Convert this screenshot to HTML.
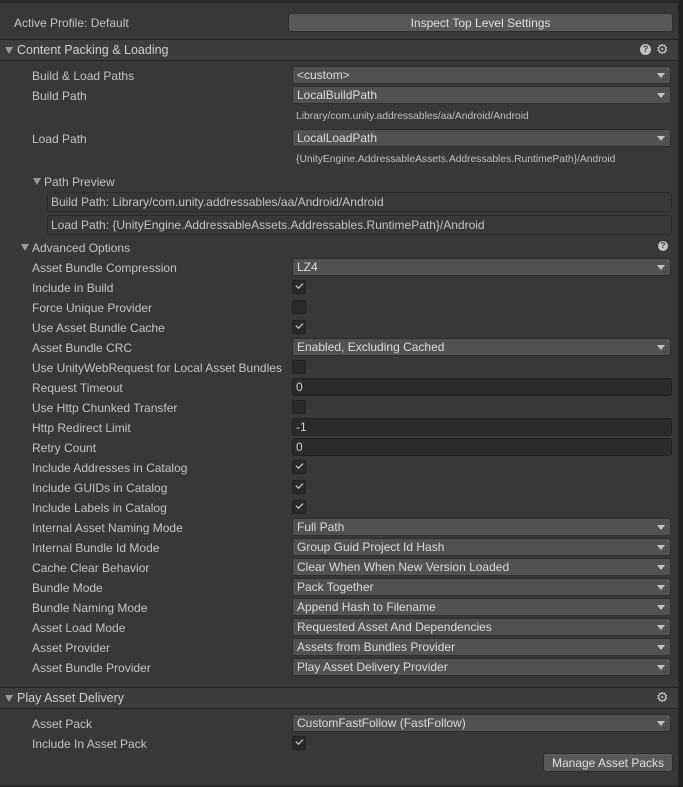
<!DOCTYPE html>
<html><head><meta charset="utf-8"><style>
body{margin:0;width:683px;height:787px;background:#383838;position:relative;overflow:hidden;font-family:"Liberation Sans",sans-serif;font-size:12px;color:#c4c4c4}
div{position:absolute;box-sizing:border-box}
.l{left:32px;white-space:nowrap;line-height:14px;transform:translateY(1px)}
.dd{left:292px;width:379px;height:18px;background:#515151;border:1px solid #2e2e2e;border-radius:3px;padding-left:4px;line-height:17px;color:#dcdcdc;white-space:nowrap}
.dd:after{content:"";position:absolute;right:5px;top:6px;border-left:4px solid transparent;border-right:4px solid transparent;border-top:5px solid #c4c4c4}
.tf{left:292px;width:380px;height:18px;background:#2a2a2a;border:1px solid #212121;border-radius:3px;padding-left:3px;line-height:17px;color:#d2d2d2}
.cb{left:292px;width:14px;height:14px;background:#2a2a2a;border:1px solid #212121;border-radius:2px}
.ck:after{content:"";position:absolute;left:3px;top:2px;width:6px;height:3px;border-left:1.6px solid #e0e0e0;border-bottom:1.6px solid #e0e0e0;transform:rotate(-45deg)}
.hdr{left:0;width:678px;height:22px;background:#3d3d3d;border-top:1px solid #232323;border-bottom:1px solid #232323;padding-left:17px;line-height:21px;font-size:12.5px;color:#d0d0d0}
.tri{width:0;height:0;border-left:4px solid transparent;border-right:4px solid transparent;border-top:7px solid #9a9a9a}
.small{left:296px;font-size:10.3px;color:#c0c0c0;white-space:nowrap}
.pv{left:47px;width:625px;height:20px;border:1px solid #2b2b2b;border-radius:3px;background:#383838;padding-left:3px;line-height:19px;color:#c4c4c4;white-space:nowrap}
</style></head><body>
<div style="left:678px;top:0;width:5px;height:787px;background:#232323"></div>
<div style="left:0;top:0;width:678px;height:3px;background:#2a2a2a"></div>
<div class="l" style="left:14px;top:15px">Active Profile: Default</div>
<div style="left:288px;top:13px;width:385px;height:19px;background:#585858;border:1px solid #2e2e2e;border-radius:3px;text-align:center;line-height:18px;color:#e0e0e0">Inspect Top Level Settings</div>

<div class="hdr" style="top:39px">Content Packing &amp; Loading</div>
<div class="tri" style="left:5px;top:47px"></div>
<div style="left:640px;top:44px;width:11px;height:11px;border-radius:50%;background:#c4c4c4;color:#3d3d3d;font-size:9px;font-weight:bold;text-align:center;line-height:11px">?</div>
<div style="left:656px;top:42px;color:#c4c4c4;font-size:14px;line-height:14px">⚙</div>

<div class="l" style="top:68px">Build &amp; Load Paths</div><div class="dd" style="top:66px">&lt;custom&gt;</div>
<div class="l" style="top:88px">Build Path</div><div class="dd" style="top:86px">LocalBuildPath</div>
<div class="small" style="top:111px">Library/com.unity.addressables/aa/Android/Android</div>
<div class="l" style="top:131px">Load Path</div><div class="dd" style="top:129px">LocalLoadPath</div>
<div class="small" style="top:154px">{UnityEngine.AddressableAssets.Addressables.RuntimePath}/Android</div>
<div class="tri" style="left:33px;top:178px"></div><div class="l" style="left:44px;top:174px">Path Preview</div>
<div class="pv" style="top:192px">Build Path: Library/com.unity.addressables/aa/Android/Android</div>
<div class="pv" style="top:215px">Load Path: {UnityEngine.AddressableAssets.Addressables.RuntimePath}/Android</div>
<div class="tri" style="left:21px;top:244px"></div><div class="l" style="left:32px;top:240px">Advanced Options</div>
<div style="left:658px;top:241px;width:10px;height:10px;border-radius:50%;background:#c4c4c4;color:#383838;font-size:8px;font-weight:bold;text-align:center;line-height:10px">?</div>

<div class="l" style="top:260px">Asset Bundle Compression</div><div class="dd" style="top:258px">LZ4</div>
<div class="l" style="top:280px">Include in Build</div><div class="cb ck" style="top:280px"></div>
<div class="l" style="top:300px">Force Unique Provider</div><div class="cb" style="top:300px"></div>
<div class="l" style="top:320px">Use Asset Bundle Cache</div><div class="cb ck" style="top:320px"></div>
<div class="l" style="top:340px">Asset Bundle CRC</div><div class="dd" style="top:338px">Enabled, Excluding Cached</div>
<div class="l" style="top:360px;width:258px;overflow:hidden">Use UnityWebRequest for Local Asset Bundles</div><div class="cb" style="top:360px"></div>
<div class="l" style="top:380px">Request Timeout</div><div class="tf" style="top:378px">0</div>
<div class="l" style="top:400px">Use Http Chunked Transfer</div><div class="cb" style="top:400px"></div>
<div class="l" style="top:420px">Http Redirect Limit</div><div class="tf" style="top:418px">-1</div>
<div class="l" style="top:440px">Retry Count</div><div class="tf" style="top:438px">0</div>
<div class="l" style="top:460px">Include Addresses in Catalog</div><div class="cb ck" style="top:460px"></div>
<div class="l" style="top:480px">Include GUIDs in Catalog</div><div class="cb ck" style="top:480px"></div>
<div class="l" style="top:500px">Include Labels in Catalog</div><div class="cb ck" style="top:500px"></div>
<div class="l" style="top:520px">Internal Asset Naming Mode</div><div class="dd" style="top:518px">Full Path</div>
<div class="l" style="top:540px">Internal Bundle Id Mode</div><div class="dd" style="top:538px">Group Guid Project Id Hash</div>
<div class="l" style="top:560px">Cache Clear Behavior</div><div class="dd" style="top:558px">Clear When When New Version Loaded</div>
<div class="l" style="top:580px">Bundle Mode</div><div class="dd" style="top:578px">Pack Together</div>
<div class="l" style="top:600px">Bundle Naming Mode</div><div class="dd" style="top:598px">Append Hash to Filename</div>
<div class="l" style="top:620px">Asset Load Mode</div><div class="dd" style="top:618px">Requested Asset And Dependencies</div>
<div class="l" style="top:640px">Asset Provider</div><div class="dd" style="top:638px">Assets from Bundles Provider</div>
<div class="l" style="top:660px">Asset Bundle Provider</div><div class="dd" style="top:658px">Play Asset Delivery Provider</div>

<div class="hdr" style="top:687px">Play Asset Delivery</div>
<div class="tri" style="left:5px;top:695px"></div>
<div style="left:656px;top:690px;color:#c4c4c4;font-size:14px;line-height:14px">⚙</div>
<div class="l" style="top:716px">Asset Pack</div><div class="dd" style="top:714px">CustomFastFollow (FastFollow)</div>
<div class="l" style="top:736px">Include In Asset Pack</div><div class="cb ck" style="top:736px"></div>
<div style="left:543px;top:753px;width:130px;height:19px;background:#585858;border:1px solid #2e2e2e;border-radius:3px;text-align:center;line-height:18px;color:#e0e0e0">Manage Asset Packs</div>
<div style="left:0;top:785px;width:678px;height:2px;background:#2a2a2a"></div>
</body></html>
